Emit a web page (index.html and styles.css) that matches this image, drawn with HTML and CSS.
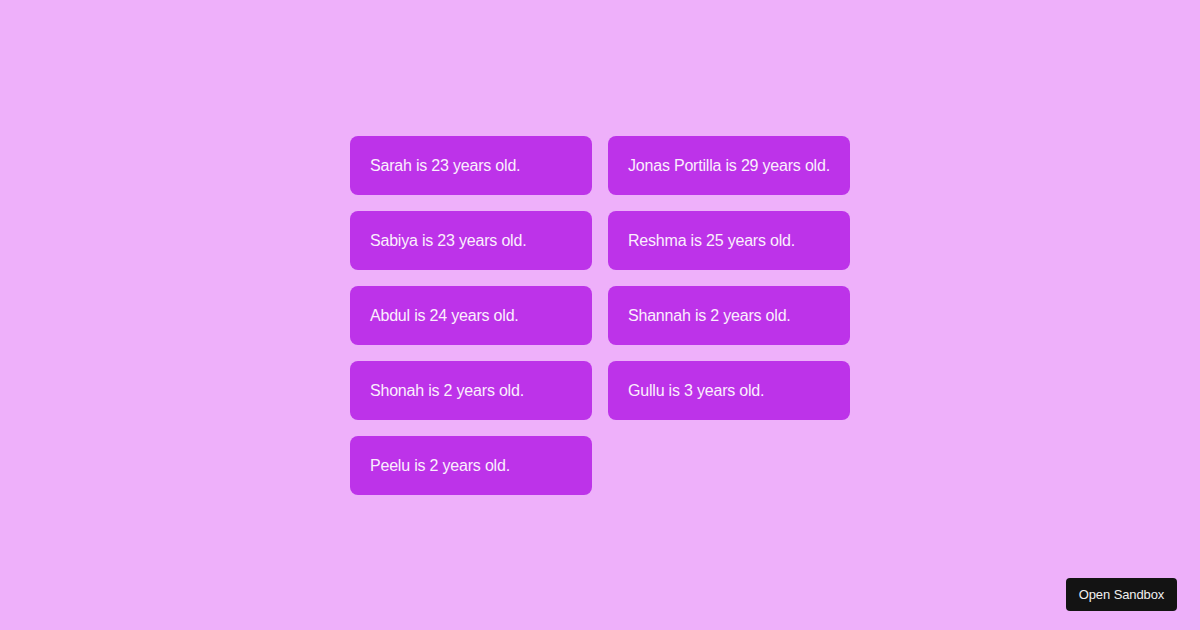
FILE: index.html
```html
<!DOCTYPE html>
<html>
<head>
<meta charset="utf-8">
<link rel="stylesheet" href="styles.css">
</head>
<body>
<main class="page">
  <div class="grid">
    <div class="card">Sarah is 23 years old.</div>
    <div class="card">Jonas Portilla is 29 years old.</div>
    <div class="card">Sabiya is 23 years old.</div>
    <div class="card">Reshma is 25 years old.</div>
    <div class="card">Abdul is 24 years old.</div>
    <div class="card">Shannah is 2 years old.</div>
    <div class="card">Shonah is 2 years old.</div>
    <div class="card">Gullu is 3 years old.</div>
    <div class="card">Peelu is 2 years old.</div>
  </div>
</main>
<a class="sandbox">Open Sandbox</a>
</body>
</html>
```
FILE: styles.css
```css
html, body {
  margin: 0;
  padding: 0;
  height: 100%;
}
body {
  background: #eeb0fa;
  font-family: "Liberation Sans", Arial, sans-serif;
}
.page {
  height: 100%;
  display: flex;
  align-items: center;
  justify-content: center;
}
.grid {
  display: grid;
  grid-template-columns: 242px 242px;
  grid-auto-rows: 59px;
  gap: 16px;
}
.card {
  background: #bd33e9;
  border-radius: 8px;
  color: #fbeefd;
  font-size: 16px;
  letter-spacing: -0.2px;
  display: flex;
  align-items: center;
  padding: 2px 20px 0;
  white-space: nowrap;
}
.sandbox {
  position: fixed;
  right: 23px;
  bottom: 19px;
  background: #131313;
  color: #f0f0f0;
  font-size: 13px;
  letter-spacing: -0.1px;
  border-radius: 4px;
  height: 33px;
  width: 111px;
  display: flex;
  align-items: center;
  justify-content: center;
}
```
